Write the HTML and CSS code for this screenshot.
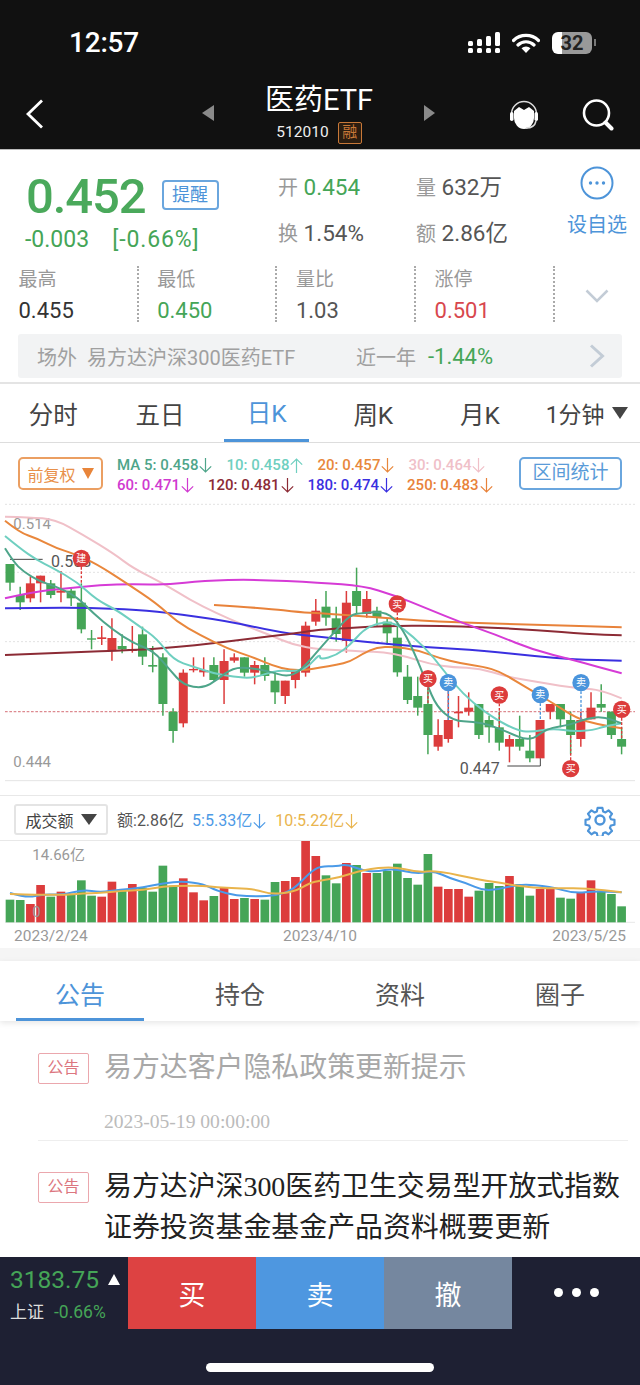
FILE: index.html
```html
<!DOCTYPE html>
<html lang="zh-CN">
<head>
  <meta charset="UTF-8">
  <meta name="viewport" content="width=device-width, initial-scale=1.0">
  <title>医药ETF</title>
  <link rel="stylesheet" href="styles.css">
</head>
<body>
  <svg class="defs">
    <symbol id="down" viewBox="0 0 13 15"><path d="M6.500 0v14M.8 8.300l5.700 5.700 5.700-5.700" fill="none" stroke="currentColor" stroke-width="1.200"/></symbol>
    <symbol id="up" viewBox="0 0 13 15"><path d="M6.500 15V1M.8 6.700L6.500 1l5.700 5.700" fill="none" stroke="currentColor" stroke-width="1.200"/></symbol>
  </svg>
  <header class="top">
    <div class="status">
      <span class="time">12:57</span>
      <div class="status-icons">
        <svg class="signal" width="32" height="22" viewBox="0 0 32 22">
          <rect x="0" y="9" width="5" height="5" rx="1.500"/><rect x="0" y="16" width="5" height="5" rx="1.500"/>
          <rect x="9" y="7" width="5" height="7" rx="1.500"/><rect x="9" y="16" width="5" height="5" rx="1.500"/>
          <rect x="18" y="4" width="5" height="10" rx="1.500"/><rect x="18" y="16" width="5" height="5" rx="1.500"/>
          <rect x="27" y="0" width="5" height="14" rx="1.500"/><rect x="27" y="16" width="5" height="5" rx="1.500"/>
        </svg>
        <svg class="wifi" width="28" height="20" viewBox="0 0 28 20">
          <path d="M1.500 7.500a18 18 0 0 1 25 0M6 12a11.500 11.500 0 0 1 16 0" fill="none" stroke="#fff" stroke-width="3.200" stroke-linecap="round"/>
          <path d="M14 20l-4.500-4.800a6.500 6.500 0 0 1 9 0z" fill="#fff"/>
        </svg>
        <div class="battery"><span>32</span></div>
        <i class="battery-nub"></i>
      </div>
    </div>
    <div class="nav">
      <svg class="back" width="18" height="30" viewBox="0 0 18 30"><path d="M16 1.500L2 15l14 13.500" fill="none" stroke="#fff" stroke-width="2.800"/></svg>
      <div class="nav-title">
        <i class="tri-left"></i>
        <div class="name">
          <div class="name-main">医药ETF</div>
          <div class="name-sub">512010<span class="rong">融</span></div>
        </div>
        <i class="tri-right"></i>
      </div>
      <div class="nav-icons">
        <svg width="32" height="32" viewBox="0 0 32 32">
          <path d="M3.500 15a12.500 12.500 0 0 1 25 0" fill="none" stroke="#ddd" stroke-width="1.500"/>
          <path d="M6 12l5-4 5 3 5-3 5 4v7a10 11 0 0 1-20 0z" fill="#fff"/>
          <rect x="2" y="13" width="3.500" height="9" rx="1.700" fill="#fff"/><rect x="26.500" y="13" width="3.500" height="9" rx="1.700" fill="#fff"/>
          <path d="M28 22c-1 5-5 7-10 7" fill="none" stroke="#ddd" stroke-width="1.500"/>
        </svg>
        <svg width="32" height="32" viewBox="0 0 32 32">
          <circle cx="14.500" cy="14" r="12.500" fill="none" stroke="#fff" stroke-width="2.600"/>
          <path d="M23.500 23.500l6 6" stroke="#fff" stroke-width="4" stroke-linecap="round"/>
        </svg>
      </div>
    </div>
  </header>

  <section class="quote">
    <div class="summary">
      <div class="price-col">
        <div class="price-row"><span class="price">0.452</span><span class="remind">提醒</span></div>
        <div class="change"><span>-0.003</span><span class="change-pct">[-0.66%]</span></div>
      </div>
      <div class="facts">
        <div><em>开</em> <span class="green">0.454</span></div>
        <div><em>量</em> 632万</div>
        <div><em>换</em> 1.54%</div>
        <div><em>额</em> 2.86亿</div>
      </div>
      <div class="watch">
        <svg width="34" height="34" viewBox="0 0 34 34">
          <circle cx="17" cy="17" r="15.500" fill="none" stroke="#4d94d9" stroke-width="2"/>
          <circle cx="10.500" cy="17" r="1.700" fill="#4d94d9"/><circle cx="17" cy="17" r="1.700" fill="#4d94d9"/><circle cx="23.500" cy="17" r="1.700" fill="#4d94d9"/>
        </svg>
        <span>设自选</span>
      </div>
    </div>
    <div class="stats">
      <div class="stat"><label>最高</label><b class="dark-val">0.455</b></div>
      <div class="stat"><label>最低</label><b class="green">0.450</b></div>
      <div class="stat"><label>量比</label><b>1.03</b></div>
      <div class="stat"><label>涨停</label><b class="red">0.501</b></div>
      <div class="more">
        <svg width="24" height="14" viewBox="0 0 24 14"><path d="M1.500 1.500L12 12 22.500 1.500" fill="none" stroke="#c3ccd6" stroke-width="2.500"/></svg>
      </div>
    </div>
    <div class="fund-bar">
      <span class="fund-a">场外</span>
      <span class="fund-b">易方达沪深300医药ETF</span>
      <span class="fund-c">近一年</span>
      <span class="fund-d green">-1.44%</span>
      <svg width="16" height="24" viewBox="0 0 16 24"><path d="M2 1.500L13.500 12 2 22.500" fill="none" stroke="#c3ccd6" stroke-width="3"/></svg>
    </div>
  </section>

  <nav class="ktabs">
    <span>分时</span>
    <span>五日</span>
    <span class="active">日K</span>
    <span>周K</span>
    <span>月K</span>
    <span class="ktab-min">1分钟<i class="tri-down"></i></span>
  </nav>

  <div class="legend">
    <div class="fq">前复权<i class="tri-down orange"></i></div>
    <div class="ma">
      <div class="ma-row">
        <span class="c5">MA 5: 0.458<svg class="arr"><use href="#down"/></svg></span>
        <span class="c10">10: 0.458<svg class="arr"><use href="#up"/></svg></span>
        <span class="c20">20: 0.457<svg class="arr"><use href="#down"/></svg></span>
        <span class="c30">30: 0.464<svg class="arr"><use href="#down"/></svg></span>
      </div>
      <div class="ma-row">
        <span class="c60">60: 0.471<svg class="arr"><use href="#down"/></svg></span>
        <span class="c120">120: 0.481<svg class="arr"><use href="#down"/></svg></span>
        <span class="c180">180: 0.474<svg class="arr"><use href="#down"/></svg></span>
        <span class="c250">250: 0.483<svg class="arr"><use href="#down"/></svg></span>
      </div>
    </div>
    <div class="range">区间统计</div>
  </div>
  <svg id="kline" class="kline" width="640" height="300" viewBox="0 150 1920 900"></svg>

  <div class="vol-head">
    <div class="vol-select">成交额<i class="tri-down dark"></i></div>
    <span class="vol-a">额:2.86亿</span>
    <span class="vol-b">5:5.33亿<svg class="arr"><use href="#down"/></svg></span>
    <span class="vol-c">10:5.22亿<svg class="arr"><use href="#down"/></svg></span>
    <svg class="gear" width="32" height="32" viewBox="0 0 32 32">
      <path d="M13.300 2.500h5.400l.8 4 2.600 1.100 3.400-2.300 3.800 3.800-2.300 3.400 1.100 2.600 4 .8v5.400l-4 .8-1.100 2.600 2.300 3.400-3.800 3.800-3.400-2.300-2.600 1.100-.8 4h-5.400l-.8-4-2.600-1.100-3.400 2.300-3.800-3.800 2.300-3.400-1.100-2.600-4-.8v-5.400l4-.8 1.100-2.600-2.300-3.400 3.800-3.800 3.400 2.300 2.600-1.100z" transform="translate(1.600 1.600) scale(.9)" fill="none" stroke="#4d94d9" stroke-width="2.400" stroke-linejoin="round"/>
      <circle cx="16" cy="16" r="4.500" fill="none" stroke="#4d94d9" stroke-width="2.400"/>
    </svg>
  </div>
  <svg id="volume" class="volume" width="640" height="82" viewBox="0 156 1920 246"></svg>
  <div class="dates"><span>2023/2/24</span><span>2023/4/10</span><span>2023/5/25</span></div>
  <div class="band"></div>

  <nav class="info-tabs">
    <span class="active">公告</span>
    <span>持仓</span>
    <span>资料</span>
    <span>圈子</span>
  </nav>

  <section class="news">
    <article class="item read">
      <span class="tag">公告</span>
      <div>
        <h3>易方达客户隐私政策更新提示</h3>
        <time>2023-05-19 00:00:00</time>
      </div>
    </article>
    <article class="item">
      <span class="tag">公告</span>
      <div>
        <h3>易方达沪深300医药卫生交易型开放式指数证券投资基金基金产品资料概要更新</h3>
      </div>
    </article>
  </section>

  <footer class="bottom">
    <div class="actions">
      <div class="index">
        <div class="index-top"><span class="index-val">3183.75</span><i class="tri-up"></i></div>
        <div class="index-sub"><span>上证</span><span class="index-pct">-0.66%</span></div>
      </div>
      <div class="act buy">买</div>
      <div class="act sell">卖</div>
      <div class="act undo">撤</div>
      <div class="act dots"><i></i><i></i><i></i></div>
    </div>
    <div class="home"></div>
  </footer>
  <script src="chart.js"></script>
</body>
</html>
```

FILE: styles.css
```css
html, body {
  margin: 0;
  padding: 0;
}
body {
  width: 640px;
  height: 1385px;
  overflow: hidden;
  background: #fff;
  color: #444;
  font-family: Roboto, "Noto Sans CJK SC", sans-serif;
}
i, em {
  font-style: normal;
}
.defs { display: none; }
.green { color: #45a557; }
.red { color: #d8474d; }

/* header */
.top {
  background: #111;
  color: #fff;
  height: 149px;
  border-bottom: 1px solid #bbb;
}
.status {
  height: 85px;
  display: flex;
  justify-content: space-between;
  align-items: center;
  padding: 0 44px 0 69px;
}
.time {
  font-size: 28px;
  font-weight: 500;
  letter-spacing: -0.2px;
}
.status-icons {
  display: flex;
  align-items: center;
}
.signal { fill: #fff; }
.wifi { margin-left: 12px; }
.battery {
  width: 40px;
  height: 22px;
  margin-left: 12px;
  border-radius: 6px;
  background: linear-gradient(90deg, #fff 24%, #999 24%);
  color: #222;
  font-size: 20px;
  font-weight: 700;
  line-height: 22px;
  text-align: center;
}
.battery-nub {
  width: 2px;
  height: 7px;
  margin-left: 2px;
  background: #777;
}
.nav {
  height: 64px;
  display: flex;
  justify-content: space-between;
  padding: 14px 26px 0 26px;
  box-sizing: border-box;
}
.nav-title {
  flex: 1;
  display: flex;
  justify-content: center;
  padding-left: 85px;
}
.tri-left, .tri-right {
  width: 0;
  height: 0;
  margin-top: 6px;
  border-top: 8.500px solid transparent;
  border-bottom: 8.500px solid transparent;
}
.tri-left { border-right: 12px solid #8a8a8a; }
.tri-right { border-left: 11px solid #8a8a8a; }
.name {
  width: 210px;
  text-align: center;
  margin-top: -14px;
}
.name-main {
  font-size: 29px;
  line-height: 30px;
}
.name-sub {
  margin-top: 6px;
  font-size: 15.500px;
  line-height: 22px;
  color: #eee;
}
.rong {
  display: inline-block;
  width: 24px;
  height: 22px;
  margin-left: 9px;
  box-sizing: border-box;
  border: 1.500px solid #c87838;
  border-radius: 2px;
  color: #c87838;
  background: #2c1d10;
  font-size: 15px;
  line-height: 19px;
}
.nav-icons {
  display: flex;
  gap: 42px;
}

/* quote block */
.quote {
  height: 232px;
  border-bottom: 2px solid #e4e4e4;
}
.summary {
  height: 116px;
  display: flex;
}
.price-col {
  width: 278px;
  padding: 22px 0 0 26px;
  box-sizing: border-box;
}
.price-row {
  height: 50px;
  display: flex;
  align-items: center;
}
.price {
  font-size: 49px;
  font-weight: 500;
  line-height: 50px;
  color: #4aa95b;
  letter-spacing: -1.100px;
}
.remind {
  width: 57px;
  height: 30px;
  margin: -4px 0 0 16px;
  box-sizing: border-box;
  border: 2px solid #6aa6de;
  border-radius: 4px;
  color: #4d94d9;
  font-size: 18px;
  line-height: 25px;
  text-align: center;
}
.change {
  display: flex;
  gap: 23px;
  margin-left: -1px;
  color: #45a557;
  font-size: 23px;
  line-height: 36px;
}
.change-pct { letter-spacing: 0.900px; }
.facts {
  width: 276px;
  padding-top: 14px;
  display: grid;
  grid-template-columns: 138px 138px;
  grid-auto-rows: 46px;
  font-size: 22.500px;
  line-height: 46px;
  color: #555;
}
.facts em {
  font-size: 20px;
  color: #999;
}
.watch {
  flex: 1;
  padding-top: 16px;
  text-align: center;
  color: #4d94d9;
  font-size: 20px;
}
.watch svg {
  display: block;
  margin: 0 auto 9px;
}
.stats {
  height: 56px;
  display: flex;
}
.stat {
  width: 138.700px;
  padding-left: 18.500px;
  box-sizing: border-box;
  border-right: 2px dotted #aaa;
}
.stat label {
  display: block;
  font-size: 19px;
  line-height: 28px;
  color: #999;
}
.stat b {
  display: block;
  font-size: 22px;
  font-weight: 400;
  line-height: 34px;
  color: #555;
}
.stat .dark-val { color: #333; }
.stat .green { color: #45a557; }
.stat .red { color: #d8474d; }
.more {
  flex: 1;
  display: flex;
  justify-content: center;
  align-items: center;
  padding-top: 3px;
}
.fund-bar {
  height: 44px;
  margin: 12px 18px 0;
  padding: 0 17px 0 19px;
  display: flex;
  align-items: center;
  background: #f2f3f4;
  border-radius: 3px;
  color: #a0a0a0;
  font-size: 20px;
}
.fund-b { margin-left: 10px; width: 269px; white-space: nowrap; }
.fund-d { margin-left: 12px; font-size: 22px; }
.fund-bar svg { margin-left: auto; }

/* k line tabs */
.ktabs {
  height: 59px;
  box-sizing: border-box;
  display: grid;
  grid-template-columns: repeat(6, 1fr);
  border-bottom: 1px solid #ddd;
  font-size: 24.500px;
  color: #444;
}
.ktabs span {
  display: flex;
  align-items: center;
  justify-content: center;
  height: 58px;
  box-sizing: border-box;
  white-space: nowrap;
}
.ktabs .ktab-min { font-size: 23px; }
.ktabs .active {
  width: 85px;
  justify-self: center;
  color: #4d94d9;
  border-bottom: 3px solid #4d94d9;
}
.tri-down {
  display: inline-block;
  width: 0;
  height: 0;
  margin-left: 7px;
  border-left: 8px solid transparent;
  border-right: 8px solid transparent;
  border-top: 12px solid #444;
}
.tri-down.orange {
  border-left-width: 6.500px;
  border-right-width: 6.500px;
  border-top: 11px solid #e8853a;
  margin-left: 6px;
}
.tri-down.dark {
  border-top: 11px solid #444;
}

/* legend */
.legend {
  height: 47px;
  display: flex;
  padding: 14px 18px 0;
  box-sizing: border-box;
}
.fq {
  width: 85px;
  height: 33px;
  flex: none;
  display: flex;
  align-items: center;
  justify-content: center;
  box-sizing: border-box;
  border: 2px solid #eb9f62;
  border-radius: 5px;
  color: #e8904a;
  font-size: 16px;
}
.ma {
  margin: -2px 0 0 14px;
  font-size: 15px;
  line-height: 20px;
  font-weight: 500;
}
.ma-row {
  display: flex;
  gap: 14px;
  white-space: nowrap;
}
.arr {
  width: 13px;
  height: 15px;
  margin-left: 1px;
  vertical-align: -3px;
}
.c5 { color: #4ea58a; }
.c10 { color: #6fcfc0; }
.c20 { color: #e8883c; }
.c30 { color: #f0c0c8; }
.c60 { color: #d03ad0; }
.c120 { color: #8c2b35; }
.c180 { color: #3a30e0; }
.c250 { color: #e8823a; }
.range {
  width: 103px;
  height: 33px;
  margin-left: auto;
  flex: none;
  box-sizing: border-box;
  border: 2px solid #6aa6de;
  border-radius: 5px;
  color: #5a9bd8;
  font-size: 19px;
  line-height: 28px;
  text-align: center;
}
.kline, .volume {
  display: block;
}
.kline .grid { stroke: #e2e2e2; stroke-width: 3; stroke-dasharray: 6 6; }
.kline .base { stroke: #e4e4e4; stroke-width: 3; }
.kline .last { stroke: #dd8a90; stroke-width: 4; stroke-dasharray: 8 5; }
.kline .mark-text {
  fill: #fff;
  font-size: 30px;
  text-anchor: middle;
  font-family: "Noto Sans CJK SC", sans-serif;
}
.axis {
  fill: #999;
  font-size: 45px;
}
.tip {
  fill: #555;
  font-size: 48px;
}

/* volume */
.vol-head {
  height: 46px;
  margin-top: 5px;
  padding: 8px 24px 0 14px;
  box-sizing: border-box;
  display: flex;
  align-items: flex-start;
  border-top: 1px solid #e8e8e8;
  font-size: 16px;
}
.vol-select {
  width: 94px;
  height: 31px;
  flex: none;
  display: flex;
  align-items: center;
  justify-content: center;
  box-sizing: border-box;
  border: 2px solid #e4e4e4;
  border-radius: 3px;
  color: #444;
  font-size: 16px;
}
.vol-a, .vol-b, .vol-c {
  line-height: 33px;
  white-space: nowrap;
}
.vol-a { margin-left: 9px; color: #555; }
.vol-b { margin-left: 8px; color: #4d9ae6; }
.vol-c { margin-left: 9px; color: #e9b44c; }
.gear { margin-left: auto; }
.volume {
  border-top: 1px solid #e8e8e8;
  margin-top: -1px;
}
.dates {
  height: 25px;
  padding: 1px 14px 0;
  box-sizing: border-box;
  display: flex;
  justify-content: space-between;
  color: #999;
  font-size: 15.500px;
  line-height: 25px;
}
.band {
  height: 13px;
  background: #f5f5f5;
}

/* lower tabs */
.info-tabs {
  height: 60px;
  display: grid;
  grid-template-columns: repeat(4, 1fr);
  background: #fff;
  box-shadow: 0 2px 6px rgba(0, 0, 0, 0.1);
  font-size: 25px;
  color: #555;
  position: relative;
}
.info-tabs span {
  display: flex;
  align-items: center;
  justify-content: center;
  height: 60px;
  box-sizing: border-box;
  padding-top: 4px;
}
.info-tabs .active {
  color: #4d94d9;
  width: 128px;
  padding-top: 7px;
  justify-self: center;
  border-bottom: 3px solid #4d94d9;
}

/* news list */
.news {
  height: 236px;
  padding: 0 12px 0 38px;
  overflow: hidden;
}
.item {
  display: flex;
  gap: 15px;
  padding-top: 31px;
}
.item.read {
  height: 87px;
  padding-top: 32px;
  border-bottom: 1px solid #eee;
}
.tag {
  flex: none;
  width: 51px;
  height: 31px;
  box-sizing: border-box;
  border: 1.500px solid #eba7ad;
  border-radius: 2px;
  color: #dc7680;
  font-size: 16px;
  line-height: 27px;
  text-align: center;
}
.item h3 {
  margin: -6px 0 0;
  font-size: 27.900px;
  font-weight: 400;
  line-height: 41px;
  color: #222;
  font-family: "Liberation Serif", "Noto Sans CJK SC", serif;
}
.item.read h3 {
  color: #a8a8a8;
}
.item time {
  display: block;
  margin-top: 23px;
  font-family: "Liberation Serif", serif;
  font-size: 19.600px;
  color: #bbb;
}

/* bottom bar */
.bottom {
  height: 128px;
  background: #1e2033;
}
.actions {
  height: 72px;
  display: flex;
}
.index {
  width: 128px;
  padding: 8px 0 0 10px;
  box-sizing: border-box;
}
.index-top {
  display: flex;
  align-items: center;
}
.index-val {
  color: #45a557;
  font-size: 24.500px;
  line-height: 30px;
}
.tri-up {
  width: 0;
  height: 0;
  margin: -2px 0 0 9px;
  border-left: 6px solid transparent;
  border-right: 6px solid transparent;
  border-bottom: 11px solid #fff;
}
.index-sub {
  margin-top: 3px;
  color: #ddd;
  font-size: 17px;
  line-height: 28px;
  display: flex;
  gap: 10px;
}
.index-pct {
  color: #45a557;
  font-size: 17.500px;
}
.act {
  width: 128px;
  display: flex;
  align-items: center;
  justify-content: center;
  color: #fff;
  font-size: 27px;
}
.buy { background: #dd4242; }
.sell { background: #4e97e0; }
.undo { background: #75879f; }
.dots {
  gap: 9px;
  padding-bottom: 2px;
  box-sizing: border-box;
}
.dots i {
  width: 9px;
  height: 9px;
  border-radius: 50%;
  background: #fff;
}
.home {
  width: 228px;
  height: 9px;
  margin: 34px auto 0;
  border-radius: 5px;
  background: #fff;
}
```

FILE: chart.js
```js
var NS = 'http://www.w3.org/2000/svg'
var GREEN = '#45a557'
var RED = '#dc3c3c'
var RIGHT = 960

// all chart numbers are in 3x units: x 0-1920, y measured from the top of the chart row
function add(svg, tag, attrs, text) {
  var el = document.createElementNS(NS, tag)
  for (var k in attrs) el.setAttribute(k, attrs[k])
  if (text) el.textContent = text
  svg.appendChild(el)
  return el
}

function slotX(i) {
  return 30 + i * 30.58
}

function smooth(pts) {
  var d = 'M' + pts[0] + ' ' + pts[1]
  for (var i = 2; i < pts.length - 2; i += 2) {
    var mx = (pts[i] + pts[i + 2]) / 2
    var my = (pts[i + 1] + pts[i + 3]) / 2
    d += 'Q' + pts[i] + ' ' + pts[i + 1] + ' ' + mx + ' ' + my
  }
  return d + 'L' + pts[pts.length - 2] + ' ' + pts[pts.length - 1]
}

function join(left, right) {
  var out = left.slice()
  for (var i = 0; i < right.length; i += 2) {
    out.push(right[i] + RIGHT, right[i + 1])
  }
  return out
}

function drawLine(svg, pts, color, width) {
  add(svg, 'path', { d: smooth(pts), fill: 'none', stroke: color, 'stroke-width': width, 'stroke-linejoin': 'round' })
}

// bodyTop, bodyBottom, wickTop, wickBottom, colour
var candles = [
  [372, 428, 372, 452, 'g'], [465, 487, 440, 510, 'g'], [430, 475, 410, 487, 'r'], [407, 430, 407, 487, 'r'],
  [430, 465, 420, 475, 'g'], [452, 458, 393, 487, 'r'], [452, 475, 445, 498, 'g'], [488, 568, 430, 580, 'g'],
  [595, 599, 570, 628, 'g'], [592, 597, 558, 615, 'r'], [594, 630, 535, 662, 'r'], [618, 628, 583, 640, 'g'],
  [627, 633, 558, 638, 'r'], [583, 650, 560, 675, 'g'], [675, 680, 618, 697, 'g'], [652, 792, 640, 827, 'g'],
  [815, 873, 805, 908, 'g'], [698, 850, 688, 862, 'r'], [687, 691, 652, 697, 'r'], [690, 697, 652, 710, 'r'],
  [675, 720, 652, 722, 'g'], [663, 720, 628, 792, 'r'], [652, 662, 640, 668, 'r'], [652, 698, 652, 710, 'g'],
  [675, 698, 663, 733, 'r'], [675, 708, 652, 722, 'g'], [722, 757, 697, 792, 'g'], [722, 768, 722, 792, 'r'],
  [687, 720, 687, 745, 'r'], [557, 698, 545, 710, 'r'], [512, 545, 477, 557, 'r'], [500, 533, 453, 557, 'g'],
  [535, 582, 500, 605, 'g'], [488, 603, 453, 638, 'r'], [453, 498, 383, 522, 'g'], [477, 522, 453, 533, 'r'],
  [512, 533, 500, 557, 'g'], [545, 580, 535, 615, 'g'], [593, 697, 545, 710, 'g'], [710, 780, 675, 792, 'g'],
  [768, 803, 710, 827, 'g'], [792, 885, 745, 943, 'g'], [885, 920, 838, 932, 'r'], [840, 897, 745, 908, 'r'],
  [815, 820, 768, 862, 'r'], [803, 815, 757, 827, 'r'], [792, 885, 792, 897, 'g'], [840, 862, 827, 908, 'g'],
  [862, 908, 815, 932, 'g'], [897, 920, 885, 967, 'r'], [897, 920, 827, 932, 'g'], [932, 955, 885, 967, 'g'],
  [840, 955, 840, 955, 'r'], [792, 815, 792, 838, 'r'], [792, 838, 792, 862, 'g'], [840, 885, 815, 943, 'g'],
  [840, 897, 815, 920, 'r'], [803, 838, 757, 838, 'r'], [792, 803, 733, 815, 'g'], [815, 885, 815, 897, 'g'],
  [897, 920, 862, 943, 'g']
]

var maLines = [
  ['#f0c0c8', join([15, 230, 90, 232, 165, 238, 250, 285, 340, 340, 400, 385, 490, 430, 570, 480, 650, 520, 730, 555, 810, 585, 880, 615, 960, 628],
    [60, 630, 130, 635, 190, 636, 260, 650, 330, 672, 400, 682, 480, 685, 560, 710, 650, 725, 720, 738, 790, 745, 840, 750, 905, 775])],
  ['#3a30e0', join([15, 505, 200, 502, 380, 507, 500, 518, 680, 542, 840, 578, 960, 590],
    [130, 605, 300, 620, 500, 633, 640, 648, 760, 658, 905, 662])],
  ['#8c2b35', join([15, 645, 200, 638, 400, 630, 530, 622, 640, 610, 760, 595, 900, 578, 960, 568],
    [200, 558, 350, 557, 500, 562, 650, 570, 800, 582, 905, 586])],
  ['#e8823a', join([642, 495, 800, 505, 900, 517, 960, 520],
    [150, 530, 350, 545, 600, 553, 905, 562])],
  ['#d63bd6', join([15, 475, 100, 455, 200, 445, 300, 435, 400, 432, 500, 435, 610, 422, 760, 418, 960, 428],
    [130, 438, 220, 465, 320, 505, 430, 550, 530, 585, 640, 630, 760, 660, 905, 700])],
  ['#e9873c', join([15, 242, 60, 278, 110, 295, 170, 325, 220, 340, 290, 372, 380, 430, 470, 490, 530, 545, 600, 585, 680, 625, 760, 652, 820, 678, 870, 690, 920, 690, 960, 682],
    [50, 675, 90, 665, 130, 640, 170, 622, 220, 620, 290, 630, 360, 655, 420, 670, 490, 680, 540, 695, 590, 725, 640, 755, 700, 790, 770, 835, 830, 852, 905, 865])],
  ['#6fcfc0', join([15, 288, 60, 325, 110, 360, 160, 385, 230, 425, 290, 480, 350, 510, 420, 560, 470, 595, 520, 660, 580, 680, 640, 700, 700, 710, 760, 715, 830, 690, 880, 695, 920, 685, 960, 640],
    [0, 660, 50, 645, 90, 615, 130, 570, 170, 550, 220, 545, 280, 590, 340, 650, 400, 730, 460, 790, 530, 840, 590, 870, 630, 877, 700, 865, 760, 875, 820, 870, 850, 860, 905, 850])],
  ['#4ea58a', join([15, 325, 40, 365, 70, 395, 120, 425, 170, 440, 230, 470, 280, 520, 340, 570, 400, 610, 460, 632, 510, 690, 550, 735, 610, 745, 650, 720, 700, 682, 760, 685, 810, 695, 860, 710, 900, 695, 960, 625],
    [40, 580, 90, 525, 130, 518, 200, 515, 240, 555, 280, 630, 320, 730, 350, 800, 400, 843, 460, 845, 510, 855, 560, 875, 630, 905, 680, 865, 750, 855, 800, 835, 850, 830, 905, 850])]
]

// label, x, circle y, dashed line end y
var marks = [
  ['建', 244, 355, 430], ['买', 1192, 492, 545], ['买', 1284, 716, 792], ['卖', 1345, 728, 840],
  ['买', 1498, 765, 862], ['卖', 1621, 764, 840], ['卖', 1743, 728, 840], ['买', 1865, 808, 897],
  ['买', 1712, 986, 885]
]

function drawKline() {
  var svg = document.querySelector('#kline')
  ;[193, 397, 605].forEach(function(y) {
    add(svg, 'line', { x1: 15, x2: 1905, y1: y, y2: y, 'class': 'grid' })
  })
  add(svg, 'line', { x1: 15, x2: 1905, y1: 1022, y2: 1022, 'class': 'base' })
  add(svg, 'line', { x1: 15, x2: 1905, y1: 815, y2: 815, 'class': 'last' })
  add(svg, 'text', { x: 40, y: 268, 'class': 'axis' }, '0.514')
  add(svg, 'text', { x: 40, y: 981, 'class': 'axis' }, '0.444')

  add(svg, 'path', { d: 'M30 358H128', stroke: '#444', 'stroke-width': 3, fill: 'none' })
  add(svg, 'text', { x: 153, y: 381, 'class': 'tip' }, '0.508')

  candles.forEach(function(c, i) {
    var color = c[4] == 'g' ? GREEN : RED
    var x = slotX(i)
    add(svg, 'line', { x1: x, x2: x, y1: c[2], y2: c[3], stroke: color, 'stroke-width': 4.5 })
    add(svg, 'rect', { x: x - 13.5, y: c[0], width: 27, height: c[1] - c[0], fill: color })
  })

  maLines.forEach(function(l) {
    drawLine(svg, l[1], l[0], 6)
  })

  add(svg, 'path', { d: 'M1522 978H1621V955', stroke: '#444', 'stroke-width': 3, fill: 'none' })
  add(svg, 'text', { x: 1379, y: 1001, 'class': 'tip' }, '0.447')

  marks.forEach(function(m) {
    var color = m[0] == '卖' ? '#4a94dc' : '#dc3c3c'
    add(svg, 'line', { x1: m[1], x2: m[1], y1: m[2], y2: m[3], stroke: color, 'stroke-width': 4, 'stroke-dasharray': '8 5' })
    add(svg, 'circle', { cx: m[1], cy: m[2], r: 26, fill: color })
    add(svg, 'text', { x: m[1], y: m[2] + 11, 'class': 'mark-text' }, m[0])
  })
}

// bar top, colour
var bars = [
  [332, 'g'], [333, 'g'], [345, 'r'], [288, 'r'], [323, 'g'], [308, 'r'], [318, 'g'], [274, 'g'], [320, 'g'], [323, 'r'],
  [278, 'r'], [302, 'g'], [285, 'r'], [296, 'g'], [308, 'g'], [230, 'g'], [290, 'g'], [268, 'r'], [310, 'r'], [334, 'r'],
  [321, 'g'], [295, 'r'], [330, 'r'], [327, 'g'], [330, 'r'], [332, 'g'], [279, 'g'], [276, 'r'], [264, 'r'], [153, 'r'],
  [201, 'r'], [259, 'g'], [283, 'g'], [222, 'r'], [228, 'g'], [252, 'r'], [252, 'g'], [246, 'g'], [224, 'g'], [267, 'g'],
  [287, 'g'], [195, 'g'], [293, 'r'], [300, 'r'], [300, 'r'], [323, 'r'], [305, 'g'], [282, 'g'], [291, 'g'], [261, 'r'],
  [285, 'g'], [320, 'g'], [300, 'r'], [296, 'r'], [326, 'g'], [329, 'g'], [312, 'r'], [274, 'r'], [305, 'g'], [315, 'g'],
  [352, 'g']
]

function drawVolume() {
  var svg = document.querySelector('#volume')
  add(svg, 'line', { x1: 15, x2: 1905, y1: 400, y2: 400, stroke: '#e8e8e8', 'stroke-width': 3 })
  bars.forEach(function(b, i) {
    add(svg, 'rect', { x: slotX(i) - 13, y: b[0], width: 26, height: 400 - b[0], fill: b[1] == 'g' ? GREEN : RED })
  })
  drawLine(svg, join([30, 312, 80, 327, 130, 315, 190, 318, 250, 302, 300, 310, 360, 302, 430, 296, 490, 282, 550, 277, 610, 285, 650, 305, 710, 320, 770, 322, 830, 320, 880, 302, 930, 250, 960, 232],
    [50, 232, 80, 226, 130, 245, 170, 248, 220, 238, 290, 255, 340, 245, 390, 268, 440, 282, 490, 305, 540, 300, 600, 285, 690, 292, 760, 313, 830, 306, 905, 310]), '#4a9ae8', 6)
  drawLine(svg, join([30, 315, 80, 317, 130, 317, 190, 318, 250, 313, 300, 312, 360, 306, 430, 303, 490, 292, 550, 290, 610, 290, 650, 295, 710, 297, 770, 302, 810, 315, 880, 310, 930, 282, 960, 275],
    [60, 265, 130, 242, 220, 232, 290, 250, 350, 245, 480, 272, 560, 285, 640, 297, 720, 298, 800, 298, 905, 310]), '#e9b44c', 6)
  add(svg, 'text', { x: 97, y: 213, 'class': 'axis' }, '14.66亿')
  add(svg, 'text', { x: 97, y: 384, 'class': 'axis' }, '0')
}

drawKline()
drawVolume()
```
